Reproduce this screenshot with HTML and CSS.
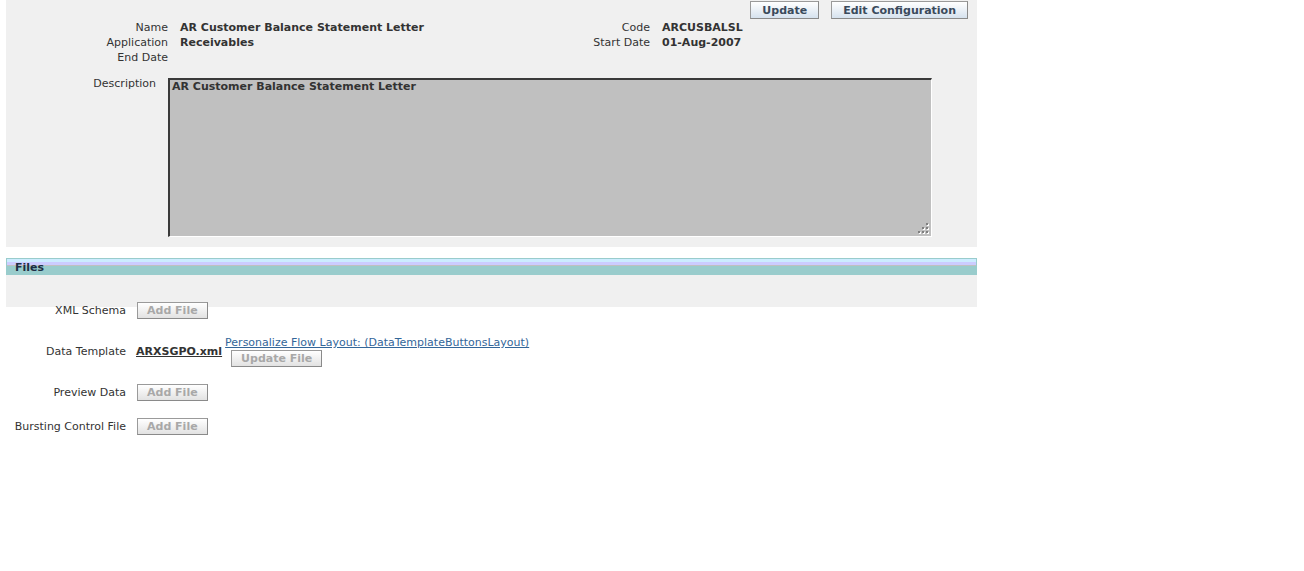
FILE: index.html
```html
<!DOCTYPE html>
<html>
<head>
<meta charset="utf-8">
<link rel="stylesheet" href="styles.css">
</head>
<body>
<div class="page">
  <div class="panel">
    <div class="actions">
      <button class="btn">Update</button>
      <button class="btn">Edit Configuration</button>
    </div>
    <div class="fields">
      <div class="grid grid-left">
        <span class="lbl">Name</span><span class="val">AR Customer Balance Statement Letter</span>
        <span class="lbl">Application</span><span class="val">Receivables</span>
        <span class="lbl">End Date</span><span class="val"></span>
      </div>
      <div class="grid grid-right">
        <span class="lbl">Code</span><span class="val">ARCUSBALSL</span>
        <span class="lbl">Start Date</span><span class="val">01-Aug-2007</span>
      </div>
    </div>
    <div class="desc-row">
      <span class="lbl desc-lbl">Description</span>
      <div class="textbox">AR Customer Balance Statement Letter
        <svg class="grip" width="12" height="12" viewBox="0 0 12 12">
          <g fill="#fff"><rect x="9" y="2" width="2" height="2"/><rect x="5" y="6" width="2" height="2"/><rect x="9" y="6" width="2" height="2"/><rect x="1" y="10" width="2" height="2"/><rect x="5" y="10" width="2" height="2"/><rect x="9" y="10" width="2" height="2"/></g>
          <g fill="#808080"><rect x="8" y="1" width="2" height="2"/><rect x="4" y="5" width="2" height="2"/><rect x="8" y="5" width="2" height="2"/><rect x="0" y="9" width="2" height="2"/><rect x="4" y="9" width="2" height="2"/><rect x="8" y="9" width="2" height="2"/></g>
        </svg>
      </div>
    </div>
  </div>

  <div class="section-head"><span>Files</span></div>
  <div class="section-band"></div>

  <div class="files">
    <div class="frow">
      <span class="flbl">XML Schema</span>
      <button class="btn btn-off">Add File</button>
    </div>
    <div class="frow">
      <span class="flbl">Data Template</span>
      <a class="fname" href="#">ARXSGPO.xml</a>
      <div class="flow">
        <a class="plink" href="#">Personalize Flow Layout: (DataTemplateButtonsLayout)</a>
        <button class="btn btn-off btn-upd">Update File</button>
      </div>
    </div>
    <div class="frow">
      <span class="flbl">Preview Data</span>
      <button class="btn btn-off">Add File</button>
    </div>
    <div class="frow">
      <span class="flbl">Bursting Control File</span>
      <button class="btn btn-off">Add File</button>
    </div>
  </div>
</div>
</body>
</html>
```

FILE: styles.css
```css
html, body {
  margin: 0;
  padding: 0;
  background: #ffffff;
}
body {
  font-family: "DejaVu Sans", Verdana, sans-serif;
  font-size: 11px;
  color: #333333;
}
.page {
  width: 971px;
  padding-left: 6px;
}
.panel {
  background: #f0f0f0;
  height: 247px;
  box-sizing: border-box;
  padding-top: 1px;
}
.actions {
  display: flex;
  justify-content: flex-end;
  gap: 12px;
  padding-right: 9px;
  height: 18px;
}
.btn {
  font-family: inherit;
  font-size: 11px;
  font-weight: bold;
  color: #3a4a5c;
  height: 18px;
  padding: 0 11px;
  border: 1px solid #9a9a9a;
  border-right-color: #8a8a8a;
  border-bottom-color: #8a8a8a;
  background: linear-gradient(#ffffff, #d6e2ee);
  border-radius: 0;
  line-height: 15px;
  cursor: pointer;
}
.btn-off {
  color: #a8a8a8;
  background: linear-gradient(#ffffff, #e2e2e2);
  height: 17px;
  line-height: 14px;
  padding: 0 9px;
}
.fields {
  display: flex;
  margin-top: 1px;
}
.grid {
  display: grid;
  column-gap: 12px;
  grid-auto-rows: 15px;
  align-items: center;
}
.grid-left {
  grid-template-columns: 162px auto;
  width: 480px;
}
.grid-right {
  grid-template-columns: 164px auto;
}
.lbl {
  text-align: right;
  font-size: 11px;
  color: #333;
  white-space: nowrap;
}
.val {
  font-weight: bold;
  white-space: nowrap;
}
.desc-row {
  display: flex;
  gap: 12px;
  margin-top: 13px;
}
.desc-lbl {
  width: 150px;
  margin-top: -1px;
}
.textbox {
  position: relative;
  width: 764px;
  height: 159px;
  box-sizing: border-box;
  background: #c0c0c0;
  border-style: solid;
  border-width: 2px 1px 1px 2px;
  border-color: #3a3a3a #ffffff #ffffff #3a3a3a;
  font-weight: bold;
  padding: 0 2px;
}
.grip {
  position: absolute;
  right: 1px;
  bottom: 2px;
}
.section-head {
  margin-top: 11px;
  height: 17px;
  box-sizing: border-box;
  border: 1px solid #99cccc;
  border-bottom: none;
  background: linear-gradient(#ccecff 0, #ccecff 3px, #ccccff 3px, #ccccff 6px, #c0c0c0 6px, #c0c0c0 7px, #99cccc 7px);
  position: relative;
}
.section-head span {
  position: absolute;
  left: 8px;
  top: 2px;
  font-weight: bold;
  color: #1e2e44;
}
.section-band {
  height: 32px;
  background: #f0f0f0;
}
.files {
  display: flex;
  flex-direction: column;
  gap: 17px;
  margin-top: -5px;
}
.frow {
  display: flex;
  align-items: center;
}
.flbl {
  width: 120px;
  text-align: right;
  margin-right: 11px;
  white-space: nowrap;
}
.fname {
  font-weight: bold;
  color: #333;
  text-decoration: underline;
  margin-right: 3px;
  margin-left: -1px;
}
.flow {
  display: flex;
  flex-direction: column;
  align-items: flex-start;
}
.plink {
  color: #336699;
  text-decoration: underline;
  line-height: 13px;
}
.btn-upd {
  margin-left: 6px;
  margin-top: 1px;
}
```
